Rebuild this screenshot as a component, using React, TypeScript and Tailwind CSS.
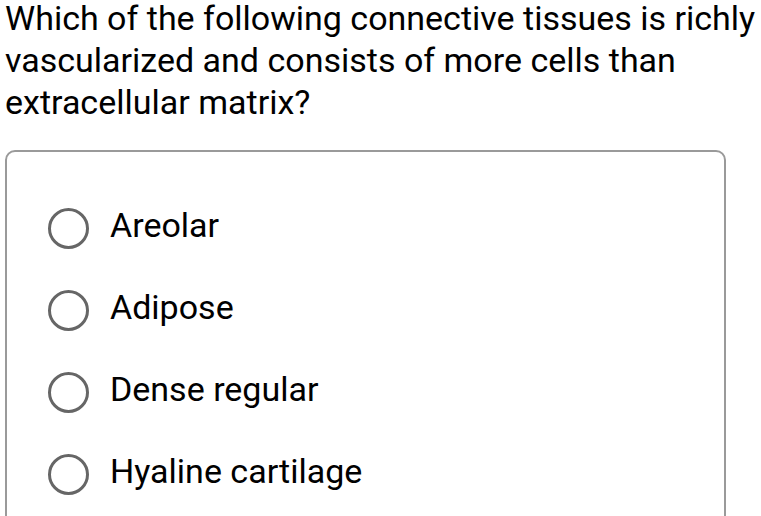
import React from 'react';

const options = ['Areolar', 'Adipose', 'Dense regular', 'Hyaline cartilage'];

export default function App() {
  return (
    <div
      className="w-[761px] h-[516px] overflow-hidden bg-white text-black"
      style={{ fontFamily: 'Roboto, "Liberation Sans", sans-serif' }}
    >
      {/* Question */}
      <p className="pl-[5px] text-[34px] leading-[42px] -mt-[3px]">
        Which of the following connective tissues is richly vascularized and consists of more cells than
        extracellular matrix?
      </p>

      {/* Answer card */}
      <div className="mt-[27px] ml-[5px] w-[721px] h-[400px] rounded-[10px] border-2 border-[#9a9a9a] pt-[35px] pl-[41px]">
        {options.map((label) => (
          <div key={label} className="flex items-center h-[82px] gap-[21px]">
            <span className="w-[41px] h-[41px] rounded-full border-[3px] border-[#666666] shrink-0" />
            <span className="text-[34px] leading-none mb-[7px]">{label}</span>
          </div>
        ))}
      </div>
    </div>
  );
}
